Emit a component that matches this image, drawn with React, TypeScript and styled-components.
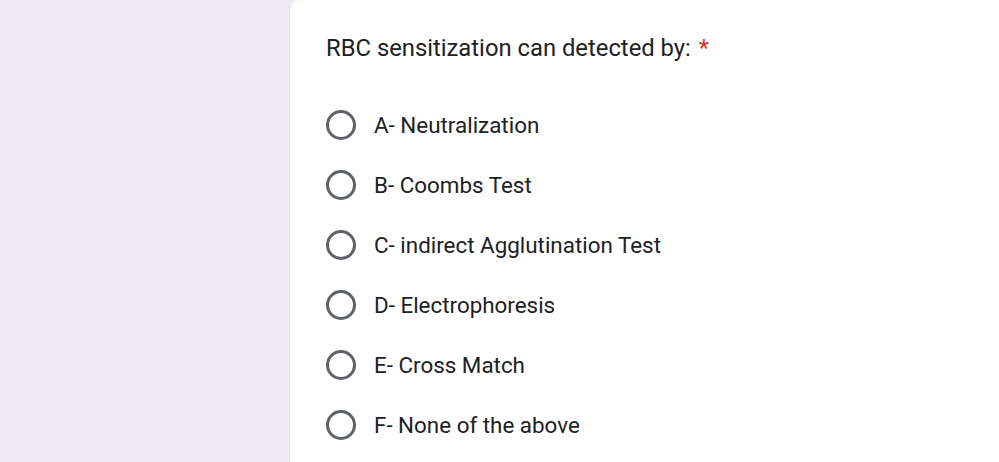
import React from "react";
import styled, { createGlobalStyle } from "styled-components";

const Global = createGlobalStyle`
  html, body { margin: 0; padding: 0; }
  body {
    background: #eeebf6;
    font-family: Roboto, "Noto Sans", Arial, sans-serif;
    height: 462px;
    overflow: hidden;
  }
`;

const Page = styled.div`
  display: flex;
  height: 462px;
  padding-left: 289px;
  box-sizing: border-box;
`;

const Card = styled.div`
  flex: 1;
  background: #ffffff;
  border-top-left-radius: 10px;
  border-left: 1px solid #e3e1e8;
  padding: 30px 0 0 36px;
  box-sizing: border-box;
`;

const Title = styled.div`
  font-size: 23.8px;
  line-height: 36px;
  color: #202124;
  margin-bottom: 29px;
`;

const Star = styled.span`
  color: #d93025;
  margin-left: 8px;
`;

const Options = styled.div`
  display: flex;
  flex-direction: column;
`;

const Row = styled.label`
  display: flex;
  align-items: center;
  height: 60px;
  gap: 18px;
  cursor: pointer;
`;

const Radio = styled.span`
  width: 30px;
  height: 30px;
  box-sizing: border-box;
  border: 3px solid #5f6368;
  border-radius: 50%;
  flex: none;
`;

const Label = styled.span`
  font-size: 22.4px;
  color: #202124;
`;

const options = [
  "A- Neutralization",
  "B- Coombs Test",
  "C- indirect Agglutination Test",
  "D- Electrophoresis",
  "E- Cross Match",
  "F- None of the above",
];

export default function App() {
  return (
    <>
      <Global />
      <Page>
        <Card>
          <Title>
            RBC sensitization can detected by:<Star>*</Star>
          </Title>
          <Options>
            {options.map((o) => (
              <Row key={o}>
                <Radio />
                <Label>{o}</Label>
              </Row>
            ))}
          </Options>
        </Card>
      </Page>
    </>
  );
}
